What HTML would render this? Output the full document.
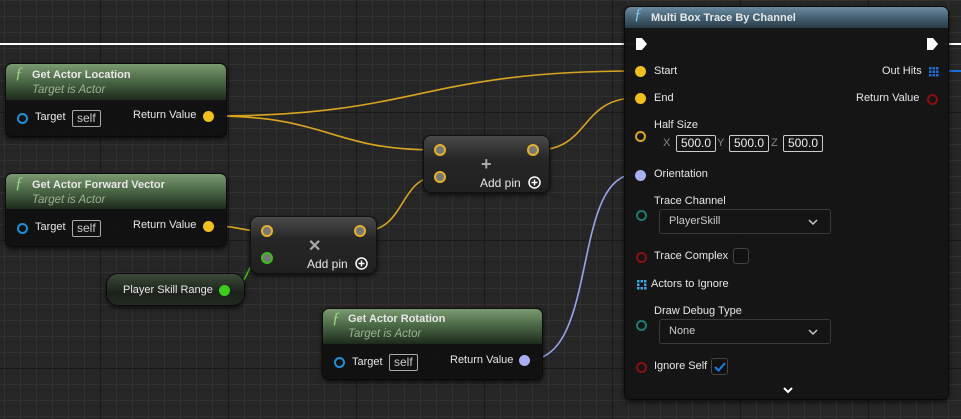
<!DOCTYPE html>
<html><head><meta charset="utf-8"><style>
*{box-sizing:border-box;margin:0;padding:0}
body{width:961px;height:419px;overflow:hidden;background:#262626;font-family:"Liberation Sans",sans-serif;color:#e8e8e8;position:relative}
.grid{position:absolute;inset:0;background-image:
linear-gradient(#1a1a1a 1px,transparent 1px),linear-gradient(90deg,#1a1a1a 1px,transparent 1px),
linear-gradient(#313131 1px,transparent 1px),linear-gradient(90deg,#313131 1px,transparent 1px);
background-size:128px 128px,128px 128px,16px 16px,16px 16px;background-position:-28px -16px}
.node{position:absolute;background:rgba(16,17,16,.96);border-radius:7px;box-shadow:0 2px 5px rgba(0,0,0,.7);border:1px solid #0a0a0a}
.hdr{position:absolute;left:0;right:0;top:0;border-radius:6px 6px 0 0;background:linear-gradient(180deg,#7a9a70 0%,#4d6a48 45%,#1d2a1c 100%)}
.t{position:absolute;font-size:11px;font-weight:bold;white-space:nowrap}
.s{position:absolute;font-size:11.5px;font-style:italic;color:#9cb48e;white-space:nowrap}
.l{position:absolute;font-size:11px;white-space:nowrap}
.f{position:absolute;font-style:italic;font-family:"Liberation Serif",serif;font-size:16px}
.box{position:absolute;border:1px solid #aaa;border-radius:2px;font-size:12px;padding:0 4px;height:17px;line-height:15px;color:#ccc}
.pin{position:absolute;width:11px;height:11px;border-radius:50%}
.op{position:absolute;background:linear-gradient(180deg,#4a4a4a,#262626 40%,#202020);border-radius:8px;box-shadow:0 2px 5px rgba(0,0,0,.7);border:1px solid #111}
.gp{position:absolute;width:12px;height:12px;border-radius:50%;background:#777;border:2px solid #e4b22a}
.dd{position:absolute;background:#141414;border:1px solid #3a3a3a;border-radius:3px;font-size:11px;color:#ccc;padding-left:9px;line-height:23px}
</style></head><body>
<div class="grid"></div>
<svg width="961" height="419" style="position:absolute;left:0;top:0" fill="none">
<line x1="0" y1="44" x2="638" y2="44" stroke="#fff" stroke-width="2"/>
<line x1="944" y1="44" x2="961" y2="44" stroke="#fff" stroke-width="2"/>
<line x1="944" y1="71" x2="961" y2="71" stroke="#1a6fd8" stroke-width="2"/>
<g stroke="#d9a520" stroke-width="1.6">
<path d="M212 116 C420 116 420 71 636 71"/>
<path d="M212 116 C330 116 330 150 436 150"/>
<path d="M212 226 C240 226 240 231 263 231"/>
<path d="M364 231 C405 231 400 177 436 177"/>
<path d="M537 150 C590 150 580 98 636 98"/>
</g>
<path d="M228 290 C250 290 245 258 263 258" stroke="#3cbd1c" stroke-width="1.6"/>
<path d="M528 360 C600 360 570 174 636 174" stroke="#9aa4ee" stroke-width="1.6"/>
</svg>

<div class="node" style="left:5px;top:63px;width:222px;height:74px">
<div class="hdr" style="height:36px"></div>
<span class="f" style="left:9px;top:1px;color:#9fd68a">ƒ</span>
<span class="t" style="left:26px;top:5px">Get Actor Location</span>
<span class="s" style="left:26px;top:20px">Target is Actor</span>
<div class="pin" style="left:11px;top:49px;border:2.5px solid #1e8fd8"></div>
<span class="l" style="left:29px;top:47px">Target</span>
<div class="box" style="left:66px;top:46px">self</div>
<span class="l" style="left:127px;top:45px">Return Value</span>
<div class="pin" style="left:197px;top:47px;background:#f0c020"></div>
</div>
<div class="node" style="left:5px;top:173px;width:222px;height:74px">
<div class="hdr" style="height:35px"></div>
<span class="f" style="left:9px;top:1px;color:#9fd68a">ƒ</span>
<span class="t" style="left:26px;top:5px">Get Actor Forward Vector</span>
<span class="s" style="left:26px;top:20px">Target is Actor</span>
<div class="pin" style="left:11px;top:49px;border:2.5px solid #1e8fd8"></div>
<span class="l" style="left:29px;top:47px">Target</span>
<div class="box" style="left:66px;top:46px">self</div>
<span class="l" style="left:127px;top:45px">Return Value</span>
<div class="pin" style="left:197px;top:47px;background:#f0c020"></div>
</div>
<div class="op" style="left:250px;top:216px;width:127px;height:58px">
<div class="gp" style="left:10px;top:8px"></div>
<div class="gp" style="left:10px;top:35px;border-color:#3cbd1c"></div>
<div class="gp" style="left:103px;top:8px"></div>
<span class="l" style="left:57px;top:19px;font-size:16px;color:#aaa;font-weight:bold">✕</span>
<span class="l" style="left:56px;top:40px;font-size:12px">Add pin</span>
<svg style="position:absolute;left:104px;top:40px" width="13" height="13"><circle cx="6.5" cy="6.5" r="5.5" stroke="#fff" stroke-width="1.5" fill="none"/><path d="M6.5 3.5V9.5M3.5 6.5H9.5" stroke="#fff" stroke-width="1.5"/></svg>
</div>
<div class="op" style="left:423px;top:135px;width:127px;height:58px">
<div class="gp" style="left:10px;top:8px"></div>
<div class="gp" style="left:10px;top:35px"></div>
<div class="gp" style="left:103px;top:8px"></div>
<span class="l" style="left:57px;top:18px;font-size:18px;color:#aaa;font-weight:bold">+</span>
<span class="l" style="left:56px;top:40px;font-size:12px">Add pin</span>
<svg style="position:absolute;left:104px;top:40px" width="13" height="13"><circle cx="6.5" cy="6.5" r="5.5" stroke="#fff" stroke-width="1.5" fill="none"/><path d="M6.5 3.5V9.5M3.5 6.5H9.5" stroke="#fff" stroke-width="1.5"/></svg>
</div>
<div style="position:absolute;left:106px;top:273px;width:139px;height:33px;border-radius:12px;background:linear-gradient(180deg,#3c4a3a,#1c221b 60%,#232a22);border:1px solid #0c0c0c;box-shadow:0 2px 5px rgba(0,0,0,.7)">
<span class="l" style="left:16px;top:10px">Player Skill Range</span>
<div class="pin" style="left:112px;top:11px;background:#3ccc1c"></div>
</div>
<div class="node" style="left:322px;top:308px;width:221px;height:72px">
<div class="hdr" style="height:35px"></div>
<span class="f" style="left:9px;top:1px;color:#9fd68a">ƒ</span>
<span class="t" style="left:25px;top:4px">Get Actor Rotation</span>
<span class="s" style="left:25px;top:19px">Target is Actor</span>
<div class="pin" style="left:11px;top:48px;border:2.5px solid #1e8fd8"></div>
<span class="l" style="left:29px;top:47px">Target</span>
<div class="box" style="left:66px;top:45px">self</div>
<span class="l" style="left:127px;top:45px">Return Value</span>
<div class="pin" style="left:196px;top:46px;background:#a8b0f0"></div>
</div>
<div class="node" style="left:624px;top:6px;width:325px;height:394px;background:rgba(20,21,20,.97)">
<div class="hdr" style="height:21px;background:linear-gradient(180deg,#6a8aa0,#3e5a6c 60%,#2a3a44)"></div>
<span class="f" style="left:9px;top:-1px;color:#8cc8ee">ƒ</span>
<span class="t" style="left:26px;top:5px">Multi Box Trace By Channel</span>
<svg style="position:absolute;left:10px;top:30px" width="13" height="14"><path d="M1 1H7L12 7L7 13H1Z" fill="#fff"/></svg>
<svg style="position:absolute;left:301px;top:30px" width="13" height="14"><path d="M1 1H7L12 7L7 13H1Z" fill="#fff"/></svg>
<div class="pin" style="left:10px;top:59px;background:#f0c020"></div>
<span class="l" style="left:29px;top:58px">Start</span>
<div class="pin" style="left:10px;top:86px;background:#f0c020"></div>
<span class="l" style="left:29px;top:85px">End</span>
<span class="l" style="left:257px;top:58px">Out Hits</span>
<svg style="position:absolute;left:304px;top:60px" width="10" height="10"><g fill="#1a6fd8"><rect x="0" y="0" width="2.5" height="2.5"/><rect x="3.5" y="0" width="2.5" height="2.5"/><rect x="7" y="0" width="2.5" height="2.5"/><rect x="0" y="3.5" width="2.5" height="2.5"/><rect x="3.5" y="3.5" width="2.5" height="2.5"/><rect x="7" y="3.5" width="2.5" height="2.5"/><rect x="0" y="7" width="2.5" height="2.5"/><rect x="3.5" y="7" width="2.5" height="2.5"/><rect x="7" y="7" width="2.5" height="2.5"/></g></svg>
<span class="l" style="left:231px;top:85px">Return Value</span>
<div class="pin" style="left:302px;top:87px;border:2.5px solid #8a1010"></div>
<span class="l" style="left:29px;top:112px">Half Size</span>
<div class="pin" style="left:10px;top:124px;border:2.5px solid #d9a520"></div>
<span class="l" style="left:38px;top:130px;color:#888">X</span>
<div class="box" style="left:51px;top:128px;color:#eee;border-color:#ccc">500.0</div>
<span class="l" style="left:92px;top:130px;color:#888">Y</span>
<div class="box" style="left:104px;top:128px;color:#eee;border-color:#ccc">500.0</div>
<span class="l" style="left:146px;top:130px;color:#888">Z</span>
<div class="box" style="left:158px;top:128px;color:#eee;border-color:#ccc">500.0</div>
<div class="pin" style="left:10px;top:163px;background:#a8b0f0"></div>
<span class="l" style="left:29px;top:161px">Orientation</span>
<span class="l" style="left:29px;top:188px">Trace Channel</span>
<div class="pin" style="left:11px;top:203px;border:2.5px solid #1e7a70"></div>
<div class="dd" style="left:34px;top:202px;width:172px;height:25px">PlayerSkill<svg style="position:absolute;right:12px;top:9px" width="10" height="7"><path d="M1 1L5 5L9 1" stroke="#ccc" stroke-width="1.5" fill="none"/></svg></div>
<div class="pin" style="left:11px;top:245px;border:2.5px solid #8a1010"></div>
<span class="l" style="left:29px;top:243px">Trace Complex</span>
<div style="position:absolute;left:108px;top:241px;width:16px;height:16px;border:1px solid #444;border-radius:3px;background:#111"></div>
<svg style="position:absolute;left:12px;top:273px" width="10" height="10"><g fill="#3aa8e8"><rect x="0" y="0" width="2.5" height="2.5"/><rect x="3.5" y="0" width="2.5" height="2.5"/><rect x="7" y="0" width="2.5" height="2.5"/><rect x="0" y="3.5" width="2.5" height="2.5"/><rect x="7" y="3.5" width="2.5" height="2.5"/><rect x="0" y="7" width="2.5" height="2.5"/><rect x="3.5" y="7" width="2.5" height="2.5"/><rect x="7" y="7" width="2.5" height="2.5"/></g></svg>
<span class="l" style="left:26px;top:271px">Actors to Ignore</span>
<span class="l" style="left:29px;top:298px">Draw Debug Type</span>
<div class="pin" style="left:11px;top:313px;border:2.5px solid #1e7a70"></div>
<div class="dd" style="left:34px;top:312px;width:172px;height:25px">None<svg style="position:absolute;right:12px;top:9px" width="10" height="7"><path d="M1 1L5 5L9 1" stroke="#ccc" stroke-width="1.5" fill="none"/></svg></div>
<div class="pin" style="left:11px;top:355px;border:2.5px solid #8a1010"></div>
<span class="l" style="left:29px;top:353px">Ignore Self</span>
<div style="position:absolute;left:86px;top:351px;width:17px;height:17px;border:1px solid #444;border-radius:3px;background:#111"></div>
<svg style="position:absolute;left:89px;top:355px" width="12" height="10"><path d="M1 5L4.5 8.5L11 1" stroke="#1a7fe8" stroke-width="2" fill="none"/></svg>
<svg style="position:absolute;left:157px;top:379px" width="12" height="8"><path d="M2 2L6 6L10 2" stroke="#fff" stroke-width="2" fill="none"/></svg>
</div>
</body></html>
